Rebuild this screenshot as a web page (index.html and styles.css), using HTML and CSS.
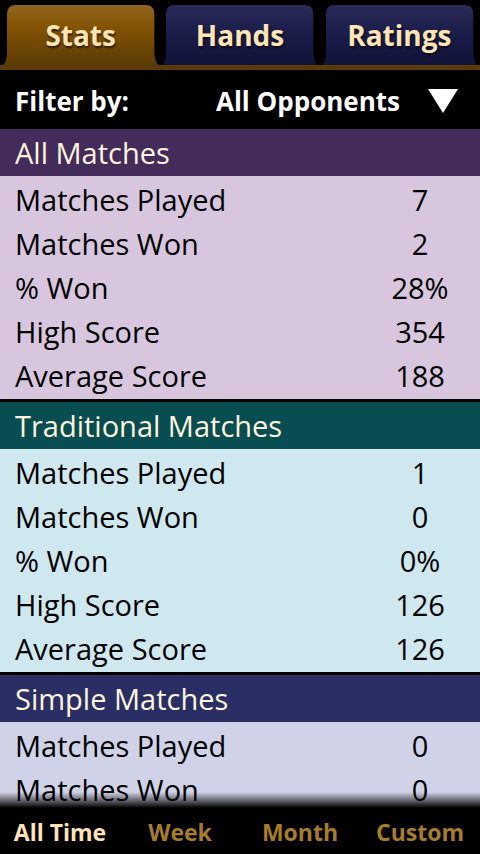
FILE: index.html
```html
<!DOCTYPE html>
<html lang="en">
<head>
<meta charset="utf-8">
<meta name="viewport" content="width=device-width, initial-scale=1">
<title>Stats</title>
<link rel="stylesheet" href="styles.css">
</head>
<body>
<svg class="defs" width="0" height="0" aria-hidden="true">
  <defs>
    <linearGradient id="gold" x1="0" y1="0" x2="0" y2="1">
      <stop offset="0" stop-color="#8f6420"/>
      <stop offset=".35" stop-color="#845404"/>
      <stop offset="1" stop-color="#5c3a04"/>
    </linearGradient>
    <linearGradient id="navy" x1="0" y1="0" x2="0" y2="1">
      <stop offset="0" stop-color="#2c2c58"/>
      <stop offset=".4" stop-color="#1c1e4c"/>
      <stop offset="1" stop-color="#121338"/>
    </linearGradient>
  </defs>
</svg>
<nav class="tabs">
  <button class="tab" type="button" aria-current="page">
    <svg class="tab-shape" viewBox="0 0 160 60" preserveAspectRatio="none" aria-hidden="true"><path fill="url(#gold)" d="M0 60Q6 60 6 46V9Q6 0 15 0H145Q154 0 154 9V46Q154 60 160 60Z"/></svg>
    <span class="tab-label">Stats</span>
  </button>
  <button class="tab" type="button">
    <svg class="tab-shape" viewBox="0 0 160 60" preserveAspectRatio="none" aria-hidden="true"><path fill="url(#navy)" d="M0 60Q6 60 6 46V9Q6 0 15 0H145Q154 0 154 9V46Q154 60 160 60Z"/></svg>
    <span class="tab-label">Hands</span>
  </button>
  <button class="tab" type="button">
    <svg class="tab-shape" viewBox="0 0 160 60" preserveAspectRatio="none" aria-hidden="true"><path fill="url(#navy)" d="M0 60Q6 60 6 46V9Q6 0 15 0H145Q154 0 154 9V46Q154 60 160 60Z"/></svg>
    <span class="tab-label">Ratings</span>
  </button>
</nav>
<div class="filter">
  <label for="opponents">Filter by:</label>
  <select id="opponents" class="filter-select"><option>All Opponents</option></select>
  <svg class="filter-arrow" width="32" height="26" viewBox="0 0 32 26" aria-hidden="true"><path fill="#fff" d="M1 1H31L16 25Z"/></svg>
</div>
<main class="groups">
  <section class="group group-all">
    <h2 class="group-title">All Matches</h2>
    <table class="stats">
      <tr><th scope="row">Matches Played</th><td>7</td></tr>
      <tr><th scope="row">Matches Won</th><td>2</td></tr>
      <tr><th scope="row">% Won</th><td>28%</td></tr>
      <tr><th scope="row">High Score</th><td>354</td></tr>
      <tr><th scope="row">Average Score</th><td>188</td></tr>
    </table>
  </section>
  <section class="group group-traditional">
    <h2 class="group-title">Traditional Matches</h2>
    <table class="stats">
      <tr><th scope="row">Matches Played</th><td>1</td></tr>
      <tr><th scope="row">Matches Won</th><td>0</td></tr>
      <tr><th scope="row">% Won</th><td>0%</td></tr>
      <tr><th scope="row">High Score</th><td>126</td></tr>
      <tr><th scope="row">Average Score</th><td>126</td></tr>
    </table>
  </section>
  <section class="group group-simple">
    <h2 class="group-title">Simple Matches</h2>
    <table class="stats">
      <tr><th scope="row">Matches Played</th><td>0</td></tr>
      <tr><th scope="row">Matches Won</th><td>0</td></tr>
    </table>
  </section>
</main>
<footer class="periods">
  <button class="period" type="button" aria-pressed="true">All Time</button>
  <button class="period" type="button" aria-pressed="false">Week</button>
  <button class="period" type="button" aria-pressed="false">Month</button>
  <button class="period" type="button" aria-pressed="false">Custom</button>
</footer>
</body>
</html>
```
FILE: styles.css
```css
* {
  box-sizing: border-box;
}

body {
  margin: 0;
  height: 100vh;
  display: flex;
  flex-direction: column;
  overflow: hidden;
  background: #000;
  color: #000;
  font-family: "Open Sans", "Noto Sans", sans-serif;
}

button,
select {
  margin: 0;
  padding: 0;
  border: 0;
  background: none;
  font-family: inherit;
  font-weight: 700;
}

.defs {
  position: absolute;
}

.tabs {
  flex: none;
  display: grid;
  grid-template-columns: repeat(3, 1fr);
  padding: 5px 1px 0;
  border-bottom: 5px solid #5c3a0a;
}

.tab {
  position: relative;
  height: 60px;
  color: #ffe4b5;
  font-size: 28px;
  line-height: 60px;
  text-shadow: 1px 2px 2px rgba(0, 0, 0, 0.6);
}

.tab-shape {
  position: absolute;
  inset: 0;
  width: 100%;
  height: 100%;
}

.tab-label {
  position: relative;
}

.filter {
  flex: none;
  display: flex;
  align-items: center;
  height: 59px;
  padding: 3px 21px 0 15px;
  color: #fff;
  font-size: 26px;
  font-weight: 700;
}

.filter-select {
  flex: 1;
  min-width: 0;
  appearance: none;
  color: #fff;
  font-size: 26px;
  text-align-last: right;
}

.filter-arrow {
  flex: none;
  margin-left: 27px;
}

.groups {
  flex: 1;
  min-height: 0;
  overflow-y: auto;
  scrollbar-width: none;
}

.group {
  margin-bottom: 3px;
  padding-bottom: 1px;
}

.group:last-child {
  margin-bottom: 0;
}

.group-title {
  margin: 0;
  padding: 0 15px;
  color: #fff4dc;
  font-size: 29px;
  font-weight: 400;
  line-height: 47px;
}

.stats {
  width: 100%;
  padding-top: 2px;
  border-spacing: 0;
  font-size: 29px;
  line-height: 44px;
}

.stats th {
  padding: 0 0 0 15px;
  font-weight: 400;
  text-align: left;
}

.stats td {
  width: 25%;
  padding: 0;
  text-align: center;
}

.group-all {
  background: #d7c6de;
}

.group-all .group-title {
  background: #432c5b;
}

.group-traditional {
  background: #cfe7ee;
}

.group-traditional .group-title {
  background: #084d51;
}

.group-simple {
  background: #d0d3e8;
}

.group-simple .group-title {
  background: #292e64;
}

.periods {
  flex: none;
  position: relative;
  display: grid;
  grid-template-columns: repeat(4, 1fr);
  height: 46px;
  padding-top: 2px;
  background: #000;
}

.periods::before {
  content: "";
  position: absolute;
  inset: -16px 0 100%;
  background: linear-gradient(transparent, #000);
}

.period {
  color: #a87c28;
  font-size: 23px;
}

.period[aria-pressed="true"] {
  color: #ffe4b5;
}
```
